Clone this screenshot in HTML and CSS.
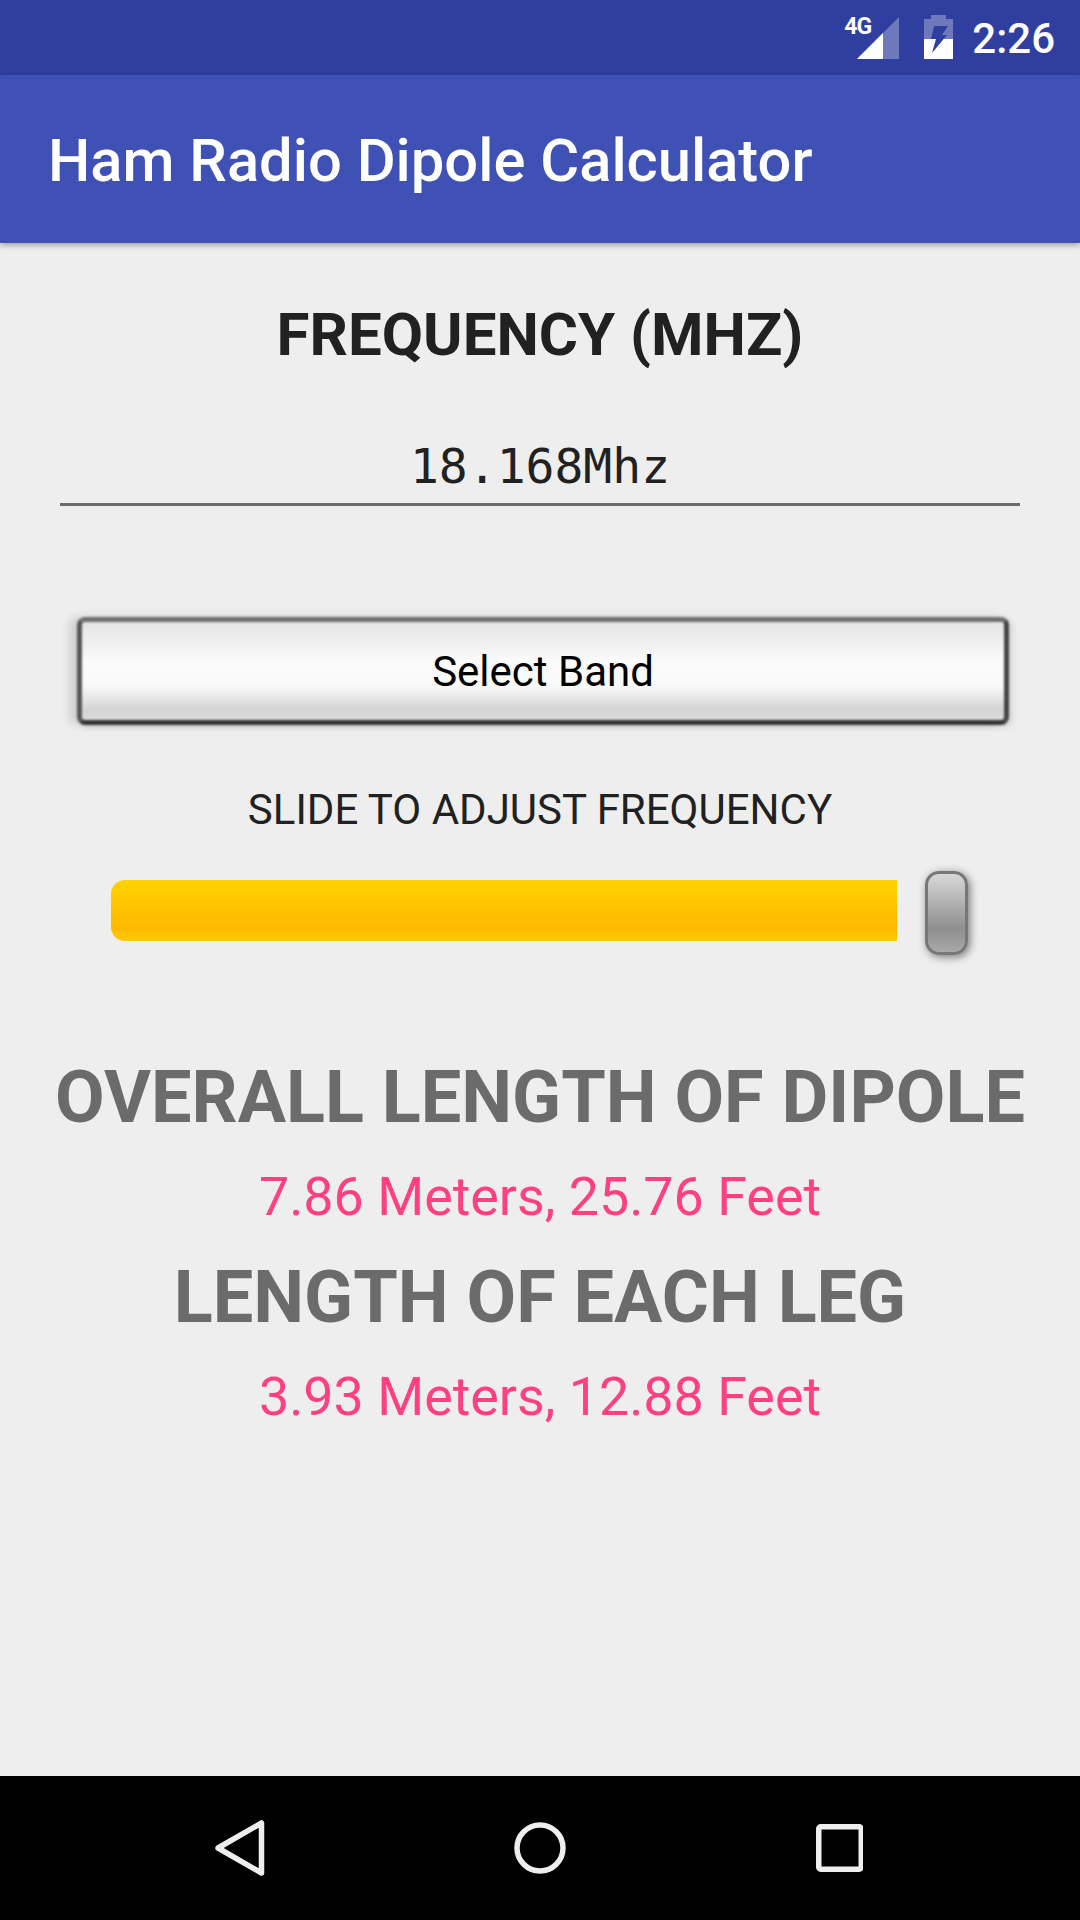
FILE: index.html
```html
<!DOCTYPE html>
<html lang="en">
<head>
<meta charset="UTF-8">
<meta name="viewport" content="width=device-width, initial-scale=1.0">
<title>Ham Radio Dipole Calculator</title>
<link rel="stylesheet" href="styles.css">
</head>
<body>

<div id="statusBar">
    <div class="status-network">
        <span class="network-type">4G</span>
        <svg class="signal-icon" width="42" height="42" viewBox="0 0 42 42">
            <polygon points="42,0 42,42 0,42" fill="#fff" fill-opacity="0.3"/>
            <polygon points="26,16 26,42 0,42" fill="#fff"/>
        </svg>
    </div>
    <svg class="battery-icon" width="29" height="44" viewBox="0 0 29 44">
        <path d="M7 0H22V4H29V44H0V4H7Z" fill="#fff" fill-opacity="0.3"/>
        <path d="M0 24H29V44H0Z" fill="#fff"/>
        <path d="M10 11H24L18 20H23L8 38L12 24H7Z" fill="#303f9f"/>
    </svg>
    <span class="status-time">2:26</span>
</div>

<header id="appBar">
    <h1>Ham Radio Dipole Calculator</h1>
</header>

<main id="content">
    <h2 class="frequency-title">FREQUENCY (MHZ)</h2>
    <div class="frequency-input">18.168Mhz</div>

    <button class="band-button">Select Band</button>

    <p class="slider-label">SLIDE TO ADJUST FREQUENCY</p>
    <div class="slider">
        <div class="slider-track"></div>
        <div class="slider-thumb"></div>
    </div>

    <section class="results">
        <h3 class="result-title">OVERALL LENGTH OF DIPOLE</h3>
        <p class="result-value">7.86 Meters, 25.76 Feet</p>
        <h3 class="result-title">LENGTH OF EACH LEG</h3>
        <p class="result-value">3.93 Meters, 12.88 Feet</p>
    </section>
</main>

<nav id="navBar">
    <svg width="54" height="60" viewBox="0 0 54 60">
        <path d="M48.5 5V55L5 30Z" fill="none" stroke="#eee" stroke-width="5.5" stroke-linejoin="round"/>
    </svg>
    <svg width="54" height="54" viewBox="0 0 54 54">
        <circle cx="27" cy="27" r="23" fill="none" stroke="#eee" stroke-width="5.5"/>
    </svg>
    <svg width="50" height="50" viewBox="0 0 50 50">
        <rect x="5.75" y="3.75" width="42.5" height="42.5" rx="2" fill="none" stroke="#eee" stroke-width="5.5"/>
    </svg>
</nav>

</body>
</html>
```

FILE: styles.css
```css
body {
    font-family: Roboto, "Liberation Sans", sans-serif;
    margin: 0;
    padding: 0;
    width: 1080px;
    height: 1920px;
    overflow: hidden;
    display: flex;
    flex-direction: column;
    background-color: #eeeeee;
}

/* Status bar */
#statusBar {
    height: 75px;
    background-color: #303f9f;
    display: flex;
    justify-content: flex-end;
    align-items: flex-start;
    padding-right: 25px;
    color: #fff;
}

.status-network {
    display: flex;
    width: 53px;
    height: 59px;
    margin-right: 25px;
    align-items: flex-end;
    justify-content: flex-end;
    position: relative;
}

.signal-icon {
    display: block;
}

.network-type {
    position: absolute;
    left: -2px;
    top: 15px;
    font-size: 23px;
    line-height: 24px;
    font-weight: 700;
    letter-spacing: -1px;
}

.battery-icon {
    margin-top: 15px;
    margin-right: 19px;
}

.status-time {
    font-size: 42px;
    line-height: 47px;
    margin-top: 15px;
    font-weight: 500;
}

/* App bar */
#appBar {
    height: 168px;
    background-color: #3f51b5;
    display: flex;
    align-items: center;
    padding-left: 48px;
    box-shadow: 0 2px 6px rgba(0, 0, 0, 0.35);
    position: relative;
}

#appBar h1 {
    margin: 4px 0 0;
    color: #fff;
    font-size: 59.7px;
    font-weight: 500;
}

/* Main content */
#content {
    flex: 1;
    display: flex;
    flex-direction: column;
    align-items: center;
}

.frequency-title {
    margin: 62px 0 0;
    font-size: 60px;
    line-height: 60px;
    font-weight: 700;
    color: #212121;
}

.frequency-input {
    width: 960px;
    margin-top: 71px;
    padding-bottom: 7px;
    border-bottom: 3px solid #6b6b6b;
    text-align: center;
    font-family: "DejaVu Sans Mono", "Liberation Mono", monospace;
    font-size: 48px;
    line-height: 60px;
    color: #212121;
}

.band-button {
    width: 932px;
    height: 108px;
    margin-top: 111px;
    margin-left: 6px;
    box-sizing: border-box;
    font-family: inherit;
    font-size: 42px;
    color: #000;
    background: transparent;
    border: 0;
    padding: 0;
    position: relative;
    isolation: isolate;
}

/* blurred frame behind the label, the reference is a scaled image */
.band-button::before {
    content: "";
    position: absolute;
    inset: 0;
    z-index: -1;
    border-radius: 8px;
    border: 5px solid;
    border-color: #6f6f6f #444 #333 #555;
    background: linear-gradient(#e4e4e4 0%, #fbfbfb 40%, #fafafa 65%, #d4d4d4 90%, #dcdcdc 100%);
    box-shadow: -8px 0 8px rgba(0, 0, 0, 0.12), 3px 2px 6px rgba(0, 0, 0, 0.12);
    filter: blur(0.8px);
}

.slider-label {
    margin: 60px 0 0;
    font-size: 42px;
    line-height: 50px;
    color: #212121;
}

.slider {
    width: 857px;
    margin-top: 31px;
    margin-left: -1px;
    display: flex;
    align-items: center;
    gap: 28px;
}

.slider-track {
    flex: 1;
    height: 61px;
    border-radius: 14px 0 0 14px;
    background: linear-gradient(#ffd300 0%, #ffb900 78%, #ffcb00 100%);
}

.slider-thumb {
    width: 43px;
    height: 84px;
    margin-top: 5px;
    box-sizing: border-box;
    border-radius: 14px;
    border: 3px solid #777;
    background: linear-gradient(#d8d8d8 0%, #8f8f8f 70%, #a8a8a8 100%);
    box-shadow: 2px 2px 8px rgba(0, 0, 0, 0.5);
}

.results {
    margin-top: 103px;
    text-align: center;
}

.result-title {
    margin: 0;
    font-size: 72px;
    line-height: 80px;
    font-weight: 700;
    color: #6b6b6b;
}

.result-value {
    margin: 29px 0 31px;
    font-size: 53.8px;
    line-height: 60px;
    color: #ff4081;
}

/* Navigation bar */
#navBar {
    height: 144px;
    background-color: #000;
    display: flex;
    align-items: center;
    justify-content: space-between;
    padding: 0 217px 0 213px;
}
```
